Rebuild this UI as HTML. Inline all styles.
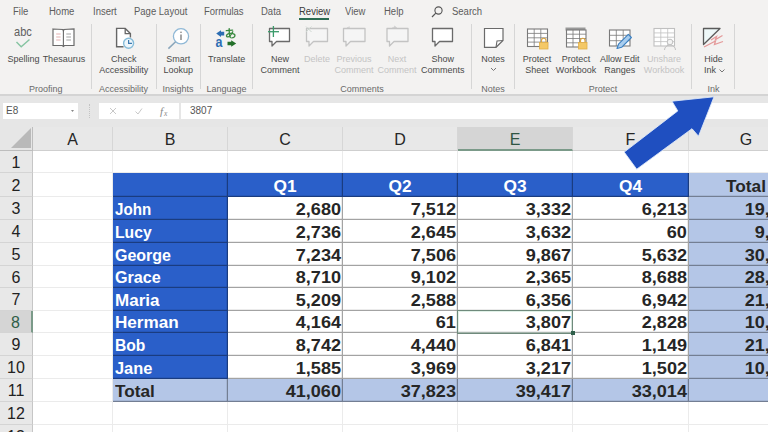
<!DOCTYPE html>
<html><head><meta charset="utf-8"><style>
*{box-sizing:border-box;margin:0;padding:0}
html{overflow:hidden;width:768px;height:432px}
body{width:768px;height:432px;overflow:hidden;position:relative;background:#fff;font-family:"Liberation Sans",sans-serif}
div{position:absolute}
.vl{width:1px;background:#ebebeb}
.hl{height:1px;background:#ebebeb}
.c{font-weight:bold;font-size:16px;color:#262626;border-right:1px solid rgba(0,0,0,.36);border-bottom:1px solid rgba(0,0,0,.36);box-shadow:inset 0 -1px 0 rgba(0,0,0,.08),inset -1px 0 0 rgba(0,0,0,.08)}
.c span{position:absolute;bottom:2px;line-height:14px;white-space:nowrap}
.c.num span{transform:scaleX(1.13)}
.c.w{color:#fff}
.ctr span{left:0;right:0;text-align:center;transform:scaleX(1.08)}
.rgt span{right:1px;transform-origin:100% 50%;transform:scaleX(1.13)}
.g span{right:3px}
.lft span{left:2px;transform-origin:0 50%;transform:scaleX(0.98)}
#ribbon{left:0;top:0;width:768px;height:96px;background:#f3f2f1}
#fbar{left:0;top:96px;width:768px;height:31px;background:#e6e6e6}
.ch{top:127px;height:24px;background:#e8e8e8;border-right:1px solid #d6d6d6;border-bottom:1px solid #cfcfcf;font-size:16px;color:#262626;text-align:center;line-height:26px}
.ch.sel{background:#d5d5d5;color:#2f5443;border-bottom:2px solid #7b9a89}
.rh{left:0;width:33px;background:#e8e8e8;border-bottom:1px solid #d4d4d4;border-right:1px solid #c6c6c6;font-size:16px;color:#222;text-align:center;display:flex;align-items:center;justify-content:center;padding-top:2px}
.rh.sel{background:#d5d5d5;color:#2f5e48;border-right:2px solid #7b9a89}
.tab{top:6px;font-size:10px;color:#5c5c5c;line-height:12px;white-space:nowrap;transform:scaleX(0.95);transform-origin:0 0}
.lbl{font-size:9px;color:#4a4a4a;text-align:center;line-height:11px;white-space:nowrap}
.glbl{font-size:9px;color:#6a6a6a;text-align:center;line-height:11px;white-space:nowrap}
.fb{font-size:10px;color:#555;line-height:14px}
.dis{color:#c4c4c4}
.sep{width:1px;background:#d6d6d6}
</style></head><body>
<div id="ribbon"></div>
<div id="fbar"></div>
<div style="left:0;top:94px;width:768px;height:2px;background:#d4d4d4"></div>
<div class="tab" style="left:12.7px">File</div><div class="tab" style="left:49.3px">Home</div><div class="tab" style="left:92.7px">Insert</div><div class="tab" style="left:134.3px">Page Layout</div><div class="tab" style="left:204.0px">Formulas</div><div class="tab" style="left:261.0px">Data</div><div class="tab" style="left:298.7px;color:#3a3a3a">Review</div><div class="tab" style="left:345.0px">View</div><div class="tab" style="left:383.7px">Help</div><div class="tab" style="left:452.0px">Search</div><div style="left:299px;top:18px;width:30px;height:2px;background:#2b6b52"></div><svg style="position:absolute;left:430px;top:5px" width="14" height="14"><circle cx="8.5" cy="5.5" r="3.6" fill="none" stroke="#555" stroke-width="1.1"/><line x1="5.8" y1="8.2" x2="2" y2="12" stroke="#555" stroke-width="1.2"/></svg><div class="sep" style="left:91px;top:24px;height:65px"></div><div class="sep" style="left:156px;top:24px;height:65px"></div><div class="sep" style="left:200px;top:24px;height:65px"></div><div class="sep" style="left:252px;top:24px;height:65px"></div><div class="sep" style="left:471px;top:24px;height:65px"></div><div class="sep" style="left:514px;top:24px;height:65px"></div><div class="sep" style="left:691px;top:24px;height:65px"></div><div class="sep" style="left:734px;top:24px;height:65px"></div><div style="left:14px;top:25px;font-size:13px;color:#606060;line-height:14px;transform:scaleX(0.85);transform-origin:0 0">abc</div><svg style="position:absolute;left:0;top:0" width="768" height="96"><polyline points="16.5,42 21.2,46.8 29.5,39.5" fill="none" stroke="#86c4a2" stroke-width="1.4"/><path d="M53,29 L62.8,29.5 L63.4,31 L64,29.5 L74,29 L74,45.5 L64.5,45.5 L63.4,46.5 L62.3,45.5 L53,45.5 Z" fill="#fff" stroke="#6a6a6a" stroke-width="1.2"/><line x1="63.4" y1="31" x2="63.4" y2="46" stroke="#6a6a6a" stroke-width="1.1"/><g stroke="#e0a6a6" stroke-width="0.9"><line x1="56.2" y1="34" x2="60.6" y2="34"/><line x1="56.2" y1="37" x2="60.6" y2="37"/><line x1="56.2" y1="40" x2="60.6" y2="40"/></g><g stroke="#999" stroke-width="0.9"><line x1="66.3" y1="34" x2="71" y2="34"/><line x1="66.3" y1="37" x2="71" y2="37"/><line x1="66.3" y1="40" x2="71" y2="40"/></g><path d="M123.5,46.8 L116.6,46.8 L116.6,28.4 L125.2,28.4 L130.4,33.6 L130.4,37.5" fill="#fff" stroke="#666" stroke-width="1.4"/><path d="M125.2,28.4 L125.2,33.6 L130.4,33.6" fill="none" stroke="#666" stroke-width="1.3"/><circle cx="128.6" cy="43.3" r="5" fill="#eef6fb" stroke="#86bcd9" stroke-width="1.4"/><path d="M128.6,40 L128.6,43.3 L132,43.3" fill="none" stroke="#3b7ab0" stroke-width="1.2"/><circle cx="181" cy="36.3" r="7.6" fill="#fff" stroke="#8fb8d6" stroke-width="1.3"/><line x1="175.6" y1="41.8" x2="168.4" y2="48.6" stroke="#8aa6bb" stroke-width="1.5"/><line x1="181" y1="34.5" x2="181" y2="40" stroke="#777" stroke-width="1.3"/><circle cx="181" cy="32.2" r="0.8" fill="#777"/><text x="215.6" y="47" font-family="Liberation Sans" font-size="12.5" font-weight="bold" fill="#2c6db2" transform="translate(215.6 47) scale(1 1.12) translate(-215.6 -47)">a</text><path d="M216.2,33.6 L221,30.2 L221,31.8 L224.2,31.8 L224.2,35.4 L221,35.4 L221,37 Z" fill="#2c6db2"/><g fill="none" stroke="#3a8a40" stroke-width="1.4" stroke-linecap="round"><path d="M226.3,30.6 L232.6,30.1"/><path d="M229.2,28.6 C229,31.5 229,34.5 230.3,37.6"/><path d="M232.8,31.8 C231.3,34.8 228.8,37.3 227.2,36.8 C225.8,36.3 226.6,33.6 230.2,33.4 C233.6,33.2 235.6,34.6 234.8,36.2 C234.3,37.2 232.9,37.8 231.8,37.9"/></g><path d="M236.2,43.5 L231.2,46.8 L231.2,45.3 L227.5,45.3 L227.5,41.7 L231.2,41.7 L231.2,40.2 Z" fill="#23702a"/></svg><svg style="position:absolute;left:0;top:0" width="768" height="96"><path d="M269.5,28.5 L289.5,28.5 L289.5,41.5 L276.5,41.5 L272.0,46.0 L272.0,41.5 L269.5,41.5 Z" fill="#fff" stroke="#6a6a6a" stroke-width="1.3" stroke-linejoin="round"/><g stroke="#3a9a6a" stroke-width="1.3"><line x1="273.4" y1="26" x2="273.4" y2="37"/><line x1="268" y1="31.7" x2="279" y2="31.7"/></g><path d="M306.5,28.5 L327.5,28.5 L327.5,41.5 L313.5,41.5 L309.0,46.0 L309.0,41.5 L306.5,41.5 Z" fill="#f5f5f5" stroke="#c3c3c3" stroke-width="1.3" stroke-linejoin="round"/><g stroke="#cfd8d2" stroke-width="1"><line x1="306" y1="26.5" x2="311.5" y2="32"/><line x1="311.5" y1="26.5" x2="306" y2="32"/></g><path d="M350,27 A5,5 0 0 0 345,33 M344,30.5 L345,33.5 L347.5,31.5" fill="none" stroke="#cfcfcf" stroke-width="1"/><path d="M390,34 A5,5 0 0 1 396,27.5 M394,26 L396.5,27.5 L394.5,30" fill="none" stroke="#cfcfcf" stroke-width="1"/><path d="M343.5,28.5 L365,28.5 L365,41.5 L350.5,41.5 L346.0,46.0 L346.0,41.5 L343.5,41.5 Z" fill="#f5f5f5" stroke="#c3c3c3" stroke-width="1.3" stroke-linejoin="round"/><path d="M387,28.5 L408,28.5 L408,41.5 L394,41.5 L389.5,46.0 L389.5,41.5 L387,41.5 Z" fill="#f5f5f5" stroke="#c3c3c3" stroke-width="1.3" stroke-linejoin="round"/><path d="M432.5,28.5 L452.5,28.5 L452.5,41.5 L439.5,41.5 L435.0,46.0 L435.0,41.5 L432.5,41.5 Z" fill="#fff" stroke="#6a6a6a" stroke-width="1.3" stroke-linejoin="round"/><path d="M484.5,28.5 L503,28.5 L503,40.5 L496,47.3 L484.5,47.3 Z" fill="#fff" stroke="#6a6a6a" stroke-width="1.2"/><path d="M503,40.5 L497,41 L496,47.3" fill="none" stroke="#6a6a6a" stroke-width="1.1"/><rect x="527.5" y="29" width="20.0" height="17.5" fill="#fff" stroke="#7a7a7a" stroke-width="1.1"/><line x1="534.2" y1="29" x2="534.2" y2="46.5" stroke="#7a7a7a" stroke-width="0.8"/><line x1="540.8" y1="29" x2="540.8" y2="46.5" stroke="#7a7a7a" stroke-width="0.8"/><line x1="527.5" y1="33.4" x2="547.5" y2="33.4" stroke="#7a7a7a" stroke-width="0.8"/><line x1="527.5" y1="37.8" x2="547.5" y2="37.8" stroke="#7a7a7a" stroke-width="0.8"/><line x1="527.5" y1="42.1" x2="547.5" y2="42.1" stroke="#7a7a7a" stroke-width="0.8"/><path d="M541.5,42.5 L541.5,40.5 A2.2,2.2 0 0 1 546,40.5 L546,42.5" fill="none" stroke="#d9a441" stroke-width="1.2"/><rect x="539.5" y="42.5" width="8.5" height="6.5" fill="#f4c866" stroke="#e2ae48" stroke-width="0.8"/><rect x="565.5" y="27.5" width="20" height="3" fill="#999"/><rect x="566.5" y="30" width="19.5" height="17" fill="#fff" stroke="#7a7a7a" stroke-width="1.1"/><line x1="573.0" y1="30" x2="573.0" y2="47" stroke="#7a7a7a" stroke-width="0.8"/><line x1="579.5" y1="30" x2="579.5" y2="47" stroke="#7a7a7a" stroke-width="0.8"/><line x1="566.5" y1="34.2" x2="586" y2="34.2" stroke="#7a7a7a" stroke-width="0.8"/><line x1="566.5" y1="38.5" x2="586" y2="38.5" stroke="#7a7a7a" stroke-width="0.8"/><line x1="566.5" y1="42.8" x2="586" y2="42.8" stroke="#7a7a7a" stroke-width="0.8"/><path d="M580.5,42.5 L580.5,40.5 A2.2,2.2 0 0 1 585,40.5 L585,42.5" fill="none" stroke="#d9a441" stroke-width="1.2"/><rect x="578.5" y="42.5" width="8.5" height="6.5" fill="#f4c866" stroke="#e2ae48" stroke-width="0.8"/><rect x="609.5" y="30" width="20.5" height="16" fill="#fff" stroke="#7a7a7a" stroke-width="1.1"/><line x1="616.3" y1="30" x2="616.3" y2="46" stroke="#7a7a7a" stroke-width="0.8"/><line x1="623.2" y1="30" x2="623.2" y2="46" stroke="#7a7a7a" stroke-width="0.8"/><line x1="609.5" y1="35.3" x2="630" y2="35.3" stroke="#7a7a7a" stroke-width="0.8"/><line x1="609.5" y1="40.7" x2="630" y2="40.7" stroke="#7a7a7a" stroke-width="0.8"/><path d="M617,48.5 L618.5,44.2 L628.3,34.4 L631.4,37.5 L621.6,47.3 Z" fill="#a9cdee" stroke="#3a7fc0" stroke-width="1.1" stroke-linejoin="round"/><rect x="654" y="28.5" width="20.5" height="17.5" fill="#fff" stroke="#c0c0c0" stroke-width="1.1"/><line x1="660.8" y1="28.5" x2="660.8" y2="46" stroke="#c0c0c0" stroke-width="0.8"/><line x1="667.7" y1="28.5" x2="667.7" y2="46" stroke="#c0c0c0" stroke-width="0.8"/><line x1="654" y1="32.9" x2="674.5" y2="32.9" stroke="#c0c0c0" stroke-width="0.8"/><line x1="654" y1="37.2" x2="674.5" y2="37.2" stroke="#c0c0c0" stroke-width="0.8"/><line x1="654" y1="41.6" x2="674.5" y2="41.6" stroke="#c0c0c0" stroke-width="0.8"/><circle cx="670" cy="42" r="2.8" fill="#f3f3f3" stroke="#c0c0c0" stroke-width="1"/><path d="M664.5,50 A5.5,5 0 0 1 675.5,50" fill="none" stroke="#c0c0c0" stroke-width="1"/><path d="M703.5,28.5 L720,28.5 L703.5,44.5 Z" fill="#eef8f8" stroke="#5a5a5a" stroke-width="1.3" stroke-linejoin="round"/><path d="M704,47 L715.5,41 L714.5,44.5 L723,41.5" fill="none" stroke="#e49a9a" stroke-width="1.3"/><path d="M711,40 L716.5,36.5 L715.5,39.5 L722.5,35.5" fill="none" stroke="#e49a9a" stroke-width="1.3"/></svg><div class="lbl" style="left:-16.4px;top:54px;width:80px">Spelling</div><div class="lbl" style="left:23.9px;top:54px;width:80px">Thesaurus</div><div class="lbl" style="left:83.7px;top:54px;width:80px">Check<br>Accessibility</div><div class="lbl" style="left:138.3px;top:54px;width:80px">Smart<br>Lookup</div><div class="lbl" style="left:186.6px;top:54px;width:80px">Translate</div><div class="lbl" style="left:240.0px;top:54px;width:80px">New<br>Comment</div><div class="lbl dis" style="left:277.0px;top:54px;width:80px">Delete</div><div class="lbl dis" style="left:314.0px;top:54px;width:80px">Previous<br>Comment</div><div class="lbl dis" style="left:357.0px;top:54px;width:80px">Next<br>Comment</div><div class="lbl" style="left:402.7px;top:54px;width:80px">Show<br>Comments</div><div class="lbl" style="left:453.0px;top:54px;width:80px">Notes</div><div class="lbl" style="left:497.0px;top:54px;width:80px">Protect<br>Sheet</div><div class="lbl" style="left:536.0px;top:54px;width:80px">Protect<br>Workbook</div><div class="lbl" style="left:579.8px;top:54px;width:80px">Allow Edit<br>Ranges</div><div class="lbl dis" style="left:624.0px;top:54px;width:80px">Unshare<br>Workbook</div><div class="lbl" style="left:673.5px;top:54px;width:80px">Hide</div><div class="lbl" style="left:704px;top:65px">Ink</div><svg style="position:absolute;left:719px;top:69px" width="6" height="4"><polyline points="0.5,0.5 3,3 5.5,0.5" fill="none" stroke="#777" stroke-width="1"/></svg><svg style="position:absolute;left:490px;top:67px" width="7" height="5"><polyline points="1,1 3.5,3.5 6,1" fill="none" stroke="#777" stroke-width="1"/></svg><div class="glbl" style="left:5.8px;top:84px;width:80px">Proofing</div><div class="glbl" style="left:83.5px;top:84px;width:80px">Accessibility</div><div class="glbl" style="left:138.0px;top:84px;width:80px">Insights</div><div class="glbl" style="left:186.6px;top:84px;width:80px">Language</div><div class="glbl" style="left:322.0px;top:84px;width:80px">Comments</div><div class="glbl" style="left:453.0px;top:84px;width:80px">Notes</div><div class="glbl" style="left:563.0px;top:84px;width:80px">Protect</div><div class="glbl" style="left:673.4px;top:84px;width:80px">Ink</div><div style="left:3px;top:103px;width:75px;height:16px;background:#fff"></div><div class="fb" style="left:6px;top:104px">E8</div><svg style="position:absolute;left:71px;top:110px" width="3" height="2"><polygon points="0,0 3,0 1.5,2" fill="#888"/></svg><div style="left:89px;top:104px;width:1px;height:14px;border-left:1px dotted #c4c4c4"></div><div style="left:99px;top:103px;width:80px;height:16px;background:#fff"></div><svg style="position:absolute;left:99px;top:103px" width="80" height="16"><g stroke="#c8c8c8" stroke-width="1"><line x1="11" y1="5" x2="17" y2="11"/><line x1="17" y1="5" x2="11" y2="11"/></g><polyline points="36.5,8.5 39,11 43,5.5" fill="none" stroke="#c8c8c8" stroke-width="1"/><text x="61" y="12" font-family="Liberation Serif" font-style="italic" font-size="11" fill="#888">f</text><text x="65" y="12.5" font-family="Liberation Serif" font-style="italic" font-size="7.5" fill="#888">x</text></svg><div style="left:181px;top:103px;width:587px;height:16px;background:#fff"></div><div class="fb" style="left:190px;top:104px">3807</div>
<div class="vl" style="left:32px;top:127px;height:305px"></div><div class="vl" style="left:112px;top:127px;height:305px"></div><div class="vl" style="left:227px;top:127px;height:305px"></div><div class="vl" style="left:342px;top:127px;height:305px"></div><div class="vl" style="left:457px;top:127px;height:305px"></div><div class="vl" style="left:572px;top:127px;height:305px"></div><div class="vl" style="left:688px;top:127px;height:305px"></div><div class="vl" style="left:803px;top:127px;height:305px"></div><div class="hl" style="left:0;top:150px;width:768px"></div><div class="hl" style="left:0;top:172px;width:768px"></div><div class="hl" style="left:0;top:196px;width:768px"></div><div class="hl" style="left:0;top:219px;width:768px"></div><div class="hl" style="left:0;top:242px;width:768px"></div><div class="hl" style="left:0;top:265px;width:768px"></div><div class="hl" style="left:0;top:287px;width:768px"></div><div class="hl" style="left:0;top:310px;width:768px"></div><div class="hl" style="left:0;top:332px;width:768px"></div><div class="hl" style="left:0;top:355px;width:768px"></div><div class="hl" style="left:0;top:378px;width:768px"></div><div class="hl" style="left:0;top:401px;width:768px"></div><div class="hl" style="left:0;top:424px;width:768px"></div><div class="hl" style="left:0;top:447px;width:768px"></div>
<div style="left:0;top:127px;width:33px;height:24px;background:#e6e6e6;border-right:1px solid #bdbdbd;border-bottom:1px solid #bdbdbd"></div>
<svg style="position:absolute;left:0;top:127px" width="33" height="24"><polygon points="11,21 31,21 31,1" fill="#b9b9b9"/></svg>
<div class="ch" style="left:33px;width:80px">A</div><div class="ch" style="left:113px;width:115px">B</div><div class="ch" style="left:228px;width:115px">C</div><div class="ch" style="left:343px;width:115px">D</div><div class="ch sel" style="left:458px;width:115px">E</div><div class="ch" style="left:573px;width:116px">F</div><div class="ch" style="left:689px;width:115px">G</div>
<div class="rh" style="top:151px;height:22px">1</div><div class="rh" style="top:173px;height:24px">2</div><div class="rh" style="top:197px;height:23px">3</div><div class="rh" style="top:220px;height:23px">4</div><div class="rh" style="top:243px;height:23px">5</div><div class="rh" style="top:266px;height:22px">6</div><div class="rh" style="top:288px;height:23px">7</div><div class="rh sel" style="top:311px;height:22px">8</div><div class="rh" style="top:333px;height:23px">9</div><div class="rh" style="top:356px;height:23px">10</div><div class="rh" style="top:379px;height:23px">11</div><div class="rh" style="top:402px;height:23px">12</div><div class="rh" style="top:425px;height:23px">13</div>
<div class="c w" style="left:113px;top:173px;width:115px;height:24px;background:#2a5fc9"><span></span></div><div class="c w ctr" style="left:228px;top:173px;width:115px;height:24px;background:#2a5fc9"><span>Q1</span></div><div class="c w ctr" style="left:343px;top:173px;width:115px;height:24px;background:#2a5fc9"><span>Q2</span></div><div class="c w ctr" style="left:458px;top:173px;width:115px;height:24px;background:#2a5fc9"><span>Q3</span></div><div class="c w ctr" style="left:573px;top:173px;width:116px;height:24px;background:#2a5fc9"><span>Q4</span></div><div class="c ctr" style="left:689px;top:173px;width:115px;height:24px;background:#b4c6e7"><span>Total</span></div><div class="c w lft" style="left:113px;top:197px;width:115px;height:23px;background:#2a5fc9"><span style="transform:scaleX(0.946)">John</span></div><div class="c rgt" style="left:228px;top:197px;width:115px;height:23px;background:#fff"><span>2,680</span></div><div class="c rgt" style="left:343px;top:197px;width:115px;height:23px;background:#fff"><span>7,512</span></div><div class="c rgt" style="left:458px;top:197px;width:115px;height:23px;background:#fff"><span>3,332</span></div><div class="c rgt" style="left:573px;top:197px;width:116px;height:23px;background:#fff"><span>6,213</span></div><div class="c rgt g" style="left:689px;top:197px;width:115px;height:23px;background:#b4c6e7"><span>19,737</span></div><div class="c w lft" style="left:113px;top:220px;width:115px;height:23px;background:#2a5fc9"><span style="transform:scaleX(0.98)">Lucy</span></div><div class="c rgt" style="left:228px;top:220px;width:115px;height:23px;background:#fff"><span>2,736</span></div><div class="c rgt" style="left:343px;top:220px;width:115px;height:23px;background:#fff"><span>2,645</span></div><div class="c rgt" style="left:458px;top:220px;width:115px;height:23px;background:#fff"><span>3,632</span></div><div class="c rgt" style="left:573px;top:220px;width:116px;height:23px;background:#fff"><span>60</span></div><div class="c rgt g" style="left:689px;top:220px;width:115px;height:23px;background:#b4c6e7"><span>9,073</span></div><div class="c w lft" style="left:113px;top:243px;width:115px;height:23px;background:#2a5fc9"><span style="transform:scaleX(1.0)">George</span></div><div class="c rgt" style="left:228px;top:243px;width:115px;height:23px;background:#fff"><span>7,234</span></div><div class="c rgt" style="left:343px;top:243px;width:115px;height:23px;background:#fff"><span>7,506</span></div><div class="c rgt" style="left:458px;top:243px;width:115px;height:23px;background:#fff"><span>9,867</span></div><div class="c rgt" style="left:573px;top:243px;width:116px;height:23px;background:#fff"><span>5,632</span></div><div class="c rgt g" style="left:689px;top:243px;width:115px;height:23px;background:#b4c6e7"><span>30,239</span></div><div class="c w lft" style="left:113px;top:266px;width:115px;height:22px;background:#2a5fc9"><span style="transform:scaleX(1.01)">Grace</span></div><div class="c rgt" style="left:228px;top:266px;width:115px;height:22px;background:#fff"><span>8,710</span></div><div class="c rgt" style="left:343px;top:266px;width:115px;height:22px;background:#fff"><span>9,102</span></div><div class="c rgt" style="left:458px;top:266px;width:115px;height:22px;background:#fff"><span>2,365</span></div><div class="c rgt" style="left:573px;top:266px;width:116px;height:22px;background:#fff"><span>8,688</span></div><div class="c rgt g" style="left:689px;top:266px;width:115px;height:22px;background:#b4c6e7"><span>28,865</span></div><div class="c w lft" style="left:113px;top:288px;width:115px;height:23px;background:#2a5fc9"><span style="transform:scaleX(1.063)">Maria</span></div><div class="c rgt" style="left:228px;top:288px;width:115px;height:23px;background:#fff"><span>5,209</span></div><div class="c rgt" style="left:343px;top:288px;width:115px;height:23px;background:#fff"><span>2,588</span></div><div class="c rgt" style="left:458px;top:288px;width:115px;height:23px;background:#fff"><span>6,356</span></div><div class="c rgt" style="left:573px;top:288px;width:116px;height:23px;background:#fff"><span>6,942</span></div><div class="c rgt g" style="left:689px;top:288px;width:115px;height:23px;background:#b4c6e7"><span>21,095</span></div><div class="c w lft" style="left:113px;top:311px;width:115px;height:22px;background:#2a5fc9"><span style="transform:scaleX(1.069)">Herman</span></div><div class="c rgt" style="left:228px;top:311px;width:115px;height:22px;background:#fff"><span>4,164</span></div><div class="c rgt" style="left:343px;top:311px;width:115px;height:22px;background:#fff"><span>61</span></div><div class="c rgt" style="left:458px;top:311px;width:115px;height:22px;background:#fff"><span>3,807</span></div><div class="c rgt" style="left:573px;top:311px;width:116px;height:22px;background:#fff"><span>2,828</span></div><div class="c rgt g" style="left:689px;top:311px;width:115px;height:22px;background:#b4c6e7"><span>10,860</span></div><div class="c w lft" style="left:113px;top:333px;width:115px;height:23px;background:#2a5fc9"><span style="transform:scaleX(0.977)">Bob</span></div><div class="c rgt" style="left:228px;top:333px;width:115px;height:23px;background:#fff"><span>8,742</span></div><div class="c rgt" style="left:343px;top:333px;width:115px;height:23px;background:#fff"><span>4,440</span></div><div class="c rgt" style="left:458px;top:333px;width:115px;height:23px;background:#fff"><span>6,841</span></div><div class="c rgt" style="left:573px;top:333px;width:116px;height:23px;background:#fff"><span>1,149</span></div><div class="c rgt g" style="left:689px;top:333px;width:115px;height:23px;background:#b4c6e7"><span>21,172</span></div><div class="c w lft" style="left:113px;top:356px;width:115px;height:23px;background:#2a5fc9"><span style="transform:scaleX(1.025)">Jane</span></div><div class="c rgt" style="left:228px;top:356px;width:115px;height:23px;background:#fff"><span>1,585</span></div><div class="c rgt" style="left:343px;top:356px;width:115px;height:23px;background:#fff"><span>3,969</span></div><div class="c rgt" style="left:458px;top:356px;width:115px;height:23px;background:#fff"><span>3,217</span></div><div class="c rgt" style="left:573px;top:356px;width:116px;height:23px;background:#fff"><span>1,502</span></div><div class="c rgt g" style="left:689px;top:356px;width:115px;height:23px;background:#b4c6e7"><span>10,273</span></div><div class="c lft" style="left:113px;top:379px;width:115px;height:23px;background:#b4c6e7"><span style="transform:scaleX(1.075)">Total</span></div><div class="c rgt" style="left:228px;top:379px;width:115px;height:23px;background:#b4c6e7"><span>41,060</span></div><div class="c rgt" style="left:343px;top:379px;width:115px;height:23px;background:#b4c6e7"><span>37,823</span></div><div class="c rgt" style="left:458px;top:379px;width:115px;height:23px;background:#b4c6e7"><span>39,417</span></div><div class="c rgt" style="left:573px;top:379px;width:116px;height:23px;background:#b4c6e7"><span>33,014</span></div><div class="c rgt" style="left:689px;top:379px;width:115px;height:23px;background:#b4c6e7"><span></span></div>
<div style="left:457px;top:310px;width:116px;height:24px;border:1px solid #6f8a7c;box-shadow:inset 0 0 0 1px rgba(170,215,190,.35)"></div>
<div style="left:571px;top:331px;width:4px;height:4px;background:#2f5f4a"></div>
<svg style="position:absolute;left:0;top:0" width="768" height="432"><polygon points="714,96.8 672,101.2 677.8,110.9 624.2,152.1 636.7,169.2 692,128.7 698.5,136.2" fill="#1f4fc0" stroke="rgba(225,235,250,0.85)" stroke-width="1" stroke-linejoin="miter"/></svg>
</body></html>
